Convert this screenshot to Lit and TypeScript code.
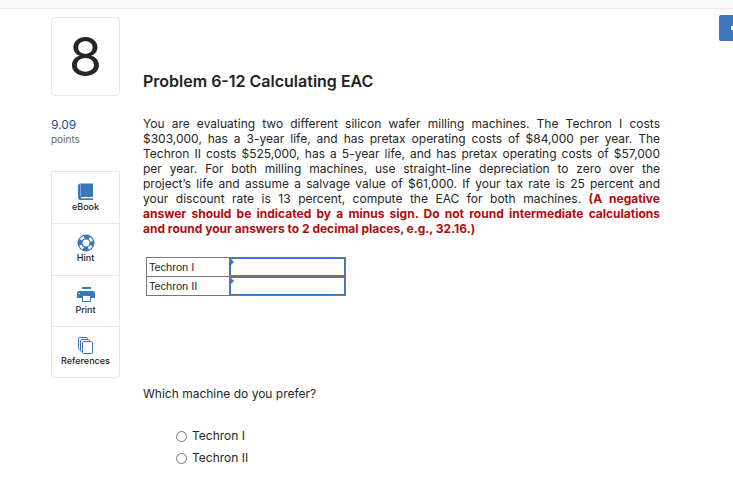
import { LitElement, html, css, svg } from "lit";
import { customElement, property } from "lit/decorators.js";

const icons: Record<string, unknown> = {
  ebook: svg`<path d="M3.5 0.5H16V14H4.5V15H16V17H3.5Q1 17 1 14.5V3Q1 0.5 3.5 0.5Z" fill="#3a76b9"/><path d="M3.5 1V13.5" stroke="#7fa6d3" fill="none"/><path d="M4 14.8H15.5" stroke="#fff" fill="none"/>`,
  hint: svg`<circle cx="9" cy="9" r="8.5" fill="#3a76b9"/><circle cx="9" cy="9" r="6" fill="none" stroke="#fff" stroke-width="2.6" stroke-dasharray="4 5.425" stroke-dashoffset="-2.712"/><circle cx="9" cy="9" r="3.4" fill="#fff"/>`,
  print: svg`<path d="M5 1H14V3H5ZM2 5H16Q18 5 18 7V12H14V9H5V12H0V7Q0 5 2 5Z" fill="#3a76b9"/><rect x="5.5" y="9.5" width="8" height="6" fill="#fff" stroke="#3a76b9"/><rect x="2" y="7" width="1" height="1" fill="#fff"/>`,
  references: svg`<g fill="#fff" stroke="#3a76b9"><rect x="1.5" y="0.5" width="9" height="12" rx="1"/><rect x="3.5" y="2.5" width="9" height="12" rx="1"/><rect x="5.5" y="4.5" width="10" height="12" rx="1"/></g>`,
};

@customElement("tool-button")
class ToolButton extends LitElement {
  @property() icon = "";
  @property() label = "";
  static styles = css`
    :host { display: block; }
    .tool {
      display: flex; flex-direction: column; align-items: center; justify-content: center;
      width: 100%; height: 100%; padding: 0; border: 0; background: none;
      font: 500 9px/12px Inter, "Open Sans", sans-serif; color: #222; cursor: pointer;
    }
    svg { display: block; }
  `;
  render() {
    return html`<button class="tool">
      <svg width="18" height="18" viewBox="0 0 18 18" aria-hidden="true">${icons[this.icon]}</svg>
      <span>${this.label}</span>
    </button>`;
  }
}

@customElement("app-root")
class AppRoot extends LitElement {
  static styles = css`
    :host { display: block; position: relative; overflow-x: hidden; background: #fff; color: #262626; font-family: Inter, "Open Sans", sans-serif; }
    * { box-sizing: border-box; }
    .topbar { height: 9px; background: #fafafa; border-bottom: 1px solid #e8e8e8; }
    .layout { display: flex; align-items: flex-start; gap: 23px; padding: 8px 73px 12px 51px; }
    .side { flex: none; width: 69px; }
    .number { display: flex; align-items: center; justify-content: center; height: 79px; border: 1px solid #e8e8e8; border-radius: 4px; font-size: 54px; line-height: 77px; }
    .score { margin: 21px 0 24px; font-size: 12px; line-height: 15px; color: #1d4f91; }
    .points { display: block; font-size: 10px; color: #666; }
    .tools { display: grid; grid-auto-rows: 1fr; height: 207px; border: 1px solid #e8e8e8; border-radius: 0 0 4px 4px; }
    .tools tool-button + tool-button { border-top: 1px solid #e8e8e8; }
    .main { flex: 1; min-width: 0; }
    h1 { margin: 53px 0 0; font-size: 16px; line-height: 22px; font-weight: 600; color: #222; }
    .text { margin: 24px 0 0; font-size: 12px; line-height: 15px; text-align: justify; }
    .line { display: block; text-align-last: justify; }
    .line:last-child { text-align-last: left; }
    .text b { color: #b00c0c; }
    table { margin: 21px 0 0 3px; border-collapse: collapse; font: 11px/14px "Liberation Sans", sans-serif; }
    th, td { height: 19px; padding: 0; border: 1px solid #777; }
    th { width: 83px; padding: 0 0 0 2px; text-align: left; font-weight: 400; }
    td { position: relative; width: 116px; }
    td::before { content: ""; position: absolute; left: 0; top: 0; border-top: 4px solid transparent; border-bottom: 4px solid transparent; border-left: 4px solid #3a76b9; }
    .answer { display: block; width: 100%; height: 18px; padding: 0 6px; border: 1px solid #3a76b9; border-radius: 0; background: #fff; font: inherit; outline: 0; }
    fieldset { margin: 90px 0 0; padding: 0; border: 0; font-size: 12px; line-height: 16px; }
    legend { padding: 0; }
    .choices { display: grid; gap: 6px; padding: 26px 0 0 33px; }
    .choice { display: flex; align-items: center; gap: 5px; }
    .choice input { appearance: none; width: 11px; height: 11px; margin: 0; border: 1px solid #767676; border-radius: 50%; background: #fff; }
    .choice input:checked { background: #3a76b9; }
    .edge { position: absolute; top: 15px; right: -20px; width: 34px; height: 26px; padding: 0 0 0 12px; border: 0; border-radius: 2px; background: #3a76b9; }
    .edge svg { display: block; }
  `;
  render() {
    const machines = ["Techron I", "Techron II"];
    const lines = [
      "You are evaluating two different silicon wafer milling machines. The Techron I costs ",
      "$303,000, has a 3-year life, and has pretax operating costs of $84,000 per year. The ",
      "Techron II costs $525,000, has a 5-year life, and has pretax operating costs of $57,000 ",
      "per year. For both milling machines, use straight-line depreciation to zero over the ",
      "project’s life and assume a salvage value of $61,000. If your tax rate is 25 percent and ",
    ];
    return html`
      <div class="topbar"></div>
      <button class="edge" aria-label="Check"><svg width="12" height="12" viewBox="0 0 12 12"><circle cx="6" cy="6" r="4" fill="none" stroke="#fff" stroke-width="2"/><path d="M1 4V8" stroke="#fff" stroke-width="2"/></svg></button>
      <div class="layout">
        <aside class="side">
          <div class="number">8</div>
          <div class="score">9.09<span class="points">points</span></div>
          <nav class="tools">
            <tool-button icon="ebook" label="eBook"></tool-button>
            <tool-button icon="hint" label="Hint"></tool-button>
            <tool-button icon="print" label="Print"></tool-button>
            <tool-button icon="references" label="References"></tool-button>
          </nav>
        </aside>
        <main class="main">
          <h1>Problem 6-12 Calculating EAC</h1>
          <p class="text">
            ${lines.map((l) => html`<span class="line">${l}</span>`)}
            <span class="line">your discount rate is 13 percent, compute the EAC for both machines. <b>(A negative</b></span>
            <span class="line"><b>answer should be indicated by a minus sign. Do not round intermediate calculations</b></span>
            <span class="line"><b>and round your answers to 2 decimal places, e.g., 32.16.)</b></span>
          </p>
          <table>
            ${machines.map((m, i) => html`<tr><th scope="row"><label for="a${i}">${m}</label></th><td><input class="answer" id="a${i}" type="text"></td></tr>`)}
          </table>
          <fieldset>
            <legend>Which machine do you prefer?</legend>
            <div class="choices">
              ${machines.map((m) => html`<label class="choice"><input type="radio" name="machine" value=${m}>${m}</label>`)}
            </div>
          </fieldset>
        </main>
      </div>`;
  }
}
